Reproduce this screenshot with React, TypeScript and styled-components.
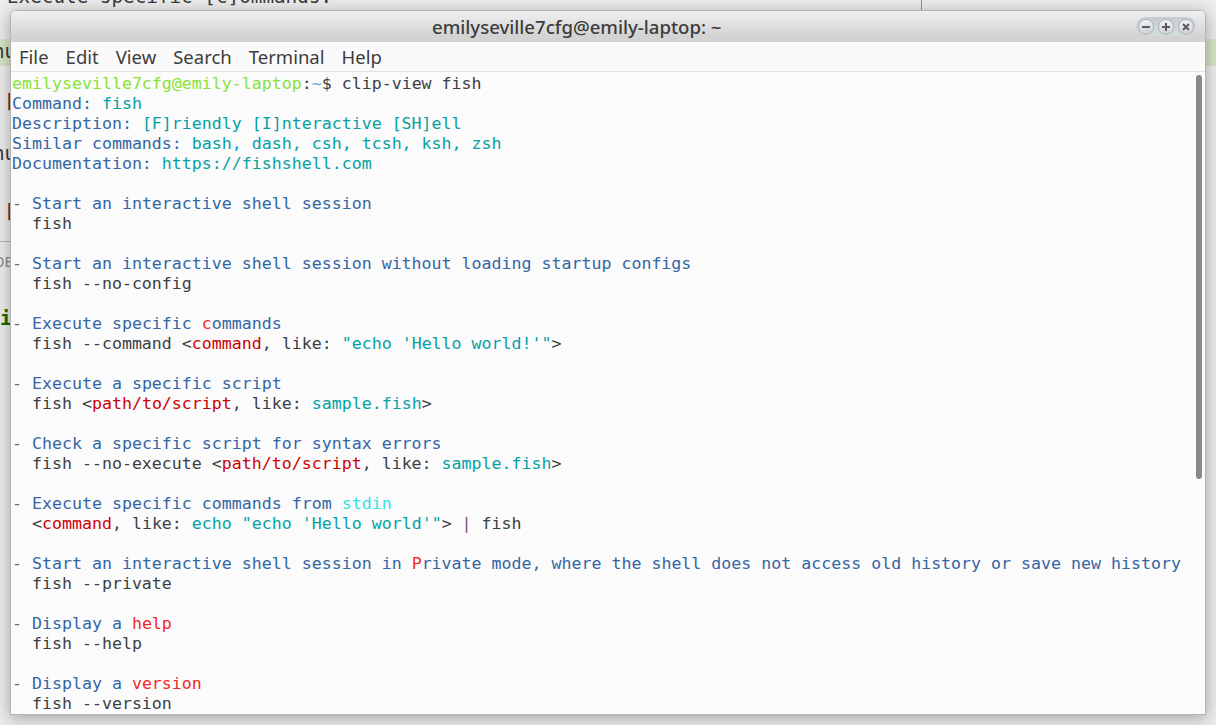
import type { FC } from 'react';
import styled, { createGlobalStyle } from 'styled-components';

type Tone = 'plain' | 'head' | 'value' | 'dash' | 'red' | 'hot' | 'sky' | 'lime' | 'tilde';
type Run = [Tone, string];

const toneColors: Record<Tone, string> = {
  plain: '#3b3f42',
  head: '#3465a4',
  value: '#06a0a4',
  dash: '#85567c',
  red: '#cc0000',
  hot: '#ef2929',
  sky: '#34e2e2',
  lime: '#8ae234',
  tilde: '#729fcf',
};

const menus = ['File', 'Edit', 'View', 'Search', 'Terminal', 'Help'];

const lines: Run[][] = [
  [['lime', 'emilyseville7cfg@emily-laptop'], ['plain', ':'], ['tilde', '~'], ['plain', '$ clip-view fish']],
  [['head', 'Command: '], ['value', 'fish']],
  [['head', 'Description: '], ['value', '[F]riendly [I]nteractive [SH]ell']],
  [['head', 'Similar commands: '], ['value', 'bash, dash, csh, tcsh, ksh, zsh']],
  [['head', 'Documentation: '], ['value', 'https://fishshell.com']],
  [],
  [['dash', '- '], ['head', 'Start an interactive shell session']],
  [['plain', '  fish']],
  [],
  [['dash', '- '], ['head', 'Start an interactive shell session without loading startup configs']],
  [['plain', '  fish --no-config']],
  [],
  [['dash', '- '], ['head', 'Execute specific '], ['hot', 'c'], ['head', 'ommands']],
  [['plain', '  fish --command <'], ['red', 'command'], ['plain', ', like: '], ['value', `"echo 'Hello world!'"`], ['plain', '>']],
  [],
  [['dash', '- '], ['head', 'Execute a specific script']],
  [['plain', '  fish <'], ['red', 'path/to/script'], ['plain', ', like: '], ['value', 'sample.fish'], ['plain', '>']],
  [],
  [['dash', '- '], ['head', 'Check a specific script for syntax errors']],
  [['plain', '  fish --no-execute <'], ['red', 'path/to/script'], ['plain', ', like: '], ['value', 'sample.fish'], ['plain', '>']],
  [],
  [['dash', '- '], ['head', 'Execute specific commands from '], ['sky', 'stdin']],
  [['plain', '  <'], ['red', 'command'], ['plain', ', like: '], ['value', `echo "echo 'Hello world'"`], ['plain', '> '], ['dash', '|'], ['plain', ' fish']],
  [],
  [['dash', '- '], ['head', 'Start an interactive shell session in '], ['hot', 'P'], ['head', 'rivate mode, where the shell does not access old history or save new history']],
  [['plain', '  fish --private']],
  [],
  [['dash', '- '], ['head', 'Display a '], ['hot', 'help']],
  [['plain', '  fish --help']],
  [],
  [['dash', '- '], ['head', 'Display a '], ['hot', 'version']],
  [['plain', '  fish --version']],
];

const GlobalStyle = createGlobalStyle`
  html, body {
    margin: 0;
    height: 100%;
    overflow: hidden;
  }
`;

const Desktop = styled.div`
  position: relative;
  width: 1216px;
  height: 725px;
  overflow: hidden;
  display: flex;
  flex-direction: column;
  background: #ececec;
  font-family: 'DejaVu Sans Mono', monospace;
  color: #3a3a3a;
`;

const TopStrip = styled.div`
  flex: none;
  height: 12px;
  padding-left: 7px;
  display: flex;
`;

const TopText = styled.div`
  width: 914px;
  height: 12px;
  font-size: 19.3px;
  line-height: 24px;
  white-space: pre;
  margin-top: -15px;
`;

const VerticalRule = styled.div`
  width: 1px;
  height: 12px;
  background: #a08d93;
`;

const BehindRow = styled.div`
  flex: 1;
  display: flex;
  justify-content: space-between;
`;

const Gutter = styled.div`
  width: 12px;
  display: flex;
  flex-direction: column;
  overflow: hidden;
`;

const GutterText = styled.div<{ $before: number; $indent: number; $small?: boolean; $tone?: string; $bold?: boolean }>`
  margin-top: ${(p) => p.$before}px;
  text-indent: ${(p) => p.$indent}px;
  height: 24px;
  white-space: pre;
  font-size: ${(p) => (p.$small ? 14 : 19.3)}px;
  line-height: 24px;
  font-weight: ${(p) => (p.$bold ? 700 : 400)};
  color: ${(p) => p.$tone ?? 'inherit'};
`;

const GreenBand = styled.div`
  flex: none;
  height: 27px;
  margin-top: 27px;
  background: #d5e5c8;
  font-size: 19.3px;
  line-height: 26px;
  white-space: pre;
  text-indent: -7px;
`;

const HorizontalRule = styled.div`
  flex: none;
  height: 1px;
  margin-top: 17px;
  background: #b5b5b5;
`;

const Window = styled.div`
  position: absolute;
  left: 10px;
  top: 10px;
  width: 1196px;
  height: 705px;
  box-sizing: border-box;
  display: flex;
  flex-direction: column;
  border: 1px solid #b4b4b4;
  border-radius: 6px 6px 0 0;
  overflow: hidden;
  background: #fbfbfb;
  box-shadow: 0 3px 16px rgba(0, 0, 0, 0.32);
`;

const TitleBar = styled.header`
  flex: none;
  height: 31px;
  display: flex;
  align-items: center;
  justify-content: space-between;
  padding: 0 9px 0 421px;
  background: linear-gradient(#f0f0f0, #d3d3d3 80%);
  font-family: 'Noto Sans', sans-serif;
  font-size: 18.6px;
  font-weight: 500;
  color: #3c3c3c;
`;

const WindowButtons = styled.div`
  height: 19px;
  display: flex;
  align-items: center;
  gap: 4px;
  padding: 0 2px;
  border-radius: 10px;
  background: linear-gradient(#c2ccd2, #d6ded8);
`;

const WindowButton = styled.div`
  width: 16px;
  height: 16px;
  border-radius: 50%;
  display: flex;
  align-items: center;
  justify-content: center;
  border: 1px solid #aab2c4;
  box-sizing: border-box;
  background: linear-gradient(#f4f4f6, #cfd0d6);
  color: #5a5a5a;
`;

const MenuBar = styled.nav`
  flex: none;
  height: 29px;
  display: flex;
  align-items: center;
  gap: 17px;
  padding-left: 8px;
  border-bottom: 1px solid #e2e2e2;
  background: #fafafa;
  font-family: 'Noto Sans', sans-serif;
  font-size: 18.5px;
  color: #3c3c3c;
`;

const MenuItem = styled.span``;

const Terminal = styled.main`
  position: relative;
  flex: 1;
  padding: 2px 0 0 1px;
  overflow: hidden;
  background: #fbfbfb;
  font-size: 16.6px;
  line-height: 20px;
`;

const Line = styled.div`
  height: 20px;
  white-space: pre;
`;

const Segment = styled.span<{ $tone: Tone }>`
  color: ${(p) => toneColors[p.$tone]};
`;

const ScrollThumb = styled.div`
  position: absolute;
  right: 3px;
  top: 3px;
  width: 6px;
  height: 404px;
  border-radius: 3px;
  background: #8a8a8a;
`;

const Glyph: FC<{ d: string }> = ({ d }) => (
  <svg width="10" height="10" viewBox="0 0 10 10" fill="none" stroke="currentColor" strokeWidth="2">
    <path d={d} />
  </svg>
);

export default function App() {
  return (
    <>
      <GlobalStyle />
      <Desktop>
        <TopStrip>
          <TopText>Execute specific [c]ommands:</TopText>
          <VerticalRule />
        </TopStrip>
        <BehindRow>
          <Gutter>
            <GreenBand>nu</GreenBand>
            <GutterText $before={24} $indent={4}>[</GutterText>
            <GutterText $before={28} $indent={-7}>nu</GutterText>
            <GutterText $before={34} $indent={4}>[</GutterText>
            <HorizontalRule />
            <GutterText $before={8} $indent={-4} $small $tone="#8a8a8a">DE</GutterText>
            <GutterText $before={33} $indent={0} $bold $tone="#1a6a00">i</GutterText>
          </Gutter>
          <Gutter>
            <GreenBand />
          </Gutter>
        </BehindRow>
        <Window>
          <TitleBar>
            emilyseville7cfg@emily-laptop: ~
            <WindowButtons>
              <WindowButton><Glyph d="M1 5h8" /></WindowButton>
              <WindowButton><Glyph d="M1 5h8M5 1v8" /></WindowButton>
              <WindowButton><Glyph d="M2 2l6 6M8 2l-6 6" /></WindowButton>
            </WindowButtons>
          </TitleBar>
          <MenuBar>
            {menus.map((menu) => (
              <MenuItem key={menu}>{menu}</MenuItem>
            ))}
          </MenuBar>
          <Terminal>
            {lines.map((runs, row) => (
              <Line key={row}>
                {runs.map(([tone, text], index) => (
                  <Segment key={index} $tone={tone}>{text}</Segment>
                ))}
              </Line>
            ))}
            <ScrollThumb />
          </Terminal>
        </Window>
      </Desktop>
    </>
  );
}
